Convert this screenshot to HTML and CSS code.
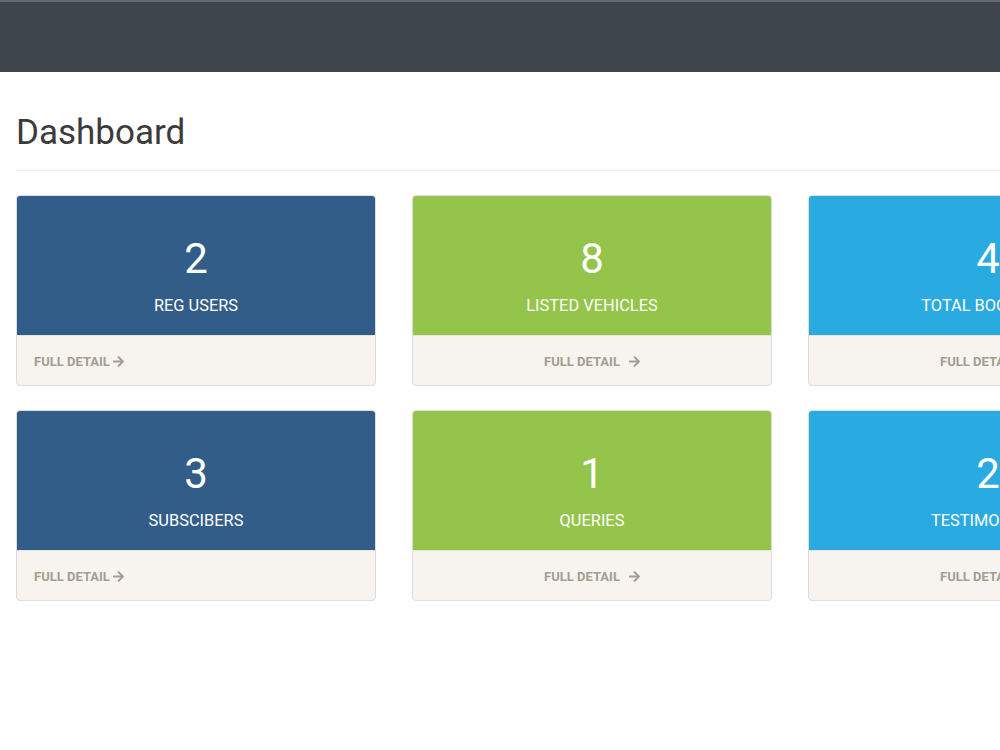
FILE: index.html
```html
<!DOCTYPE html>
<html lang="en">
<head>
    <meta charset="UTF-8">
    <meta name="viewport" content="width=device-width, initial-scale=1.0">
    <title>Dashboard</title>
    <link rel="stylesheet" href="styles.css">
</head>
<body>
    <div class="topbar"></div>

    <div class="content">
        <h2 class="page-title">Dashboard</h2>

        <div class="stats">
            <div class="panel">
                <div class="panel-body blue">
                    <div class="stat-num">2</div>
                    <div class="stat-label">Reg Users</div>
                </div>
                <div class="panel-footer left">
                    Full Detail<svg class="arrow" viewBox="0 0 448 512"><path d="M190.5 66.9l22.2-22.2c9.4-9.4 24.6-9.4 33.9 0L441 239c9.4 9.4 9.4 24.6 0 33.9L246.6 467.3c-9.4 9.4-24.6 9.4-33.9 0l-22.2-22.2c-9.5-9.5-9.3-25 .4-34.3L311.4 296H24c-13.3 0-24-10.7-24-24v-32c0-13.3 10.7-24 24-24h287.4L190.9 101.2c-9.8-9.3-10-24.8-.4-34.3z"/></svg>
                </div>
            </div>
            <div class="panel">
                <div class="panel-body green">
                    <div class="stat-num">8</div>
                    <div class="stat-label">Listed Vehicles</div>
                </div>
                <div class="panel-footer">
                    Full Detail <svg class="arrow spaced" viewBox="0 0 448 512"><path d="M190.5 66.9l22.2-22.2c9.4-9.4 24.6-9.4 33.9 0L441 239c9.4 9.4 9.4 24.6 0 33.9L246.6 467.3c-9.4 9.4-24.6 9.4-33.9 0l-22.2-22.2c-9.5-9.5-9.3-25 .4-34.3L311.4 296H24c-13.3 0-24-10.7-24-24v-32c0-13.3 10.7-24 24-24h287.4L190.9 101.2c-9.8-9.3-10-24.8-.4-34.3z"/></svg>
                </div>
            </div>
            <div class="panel">
                <div class="panel-body sky">
                    <div class="stat-num">4</div>
                    <div class="stat-label">Total Bookings</div>
                </div>
                <div class="panel-footer">
                    Full Detail <svg class="arrow spaced" viewBox="0 0 448 512"><path d="M190.5 66.9l22.2-22.2c9.4-9.4 24.6-9.4 33.9 0L441 239c9.4 9.4 9.4 24.6 0 33.9L246.6 467.3c-9.4 9.4-24.6 9.4-33.9 0l-22.2-22.2c-9.5-9.5-9.3-25 .4-34.3L311.4 296H24c-13.3 0-24-10.7-24-24v-32c0-13.3 10.7-24 24-24h287.4L190.9 101.2c-9.8-9.3-10-24.8-.4-34.3z"/></svg>
                </div>
            </div>

            <div class="panel">
                <div class="panel-body blue">
                    <div class="stat-num">3</div>
                    <div class="stat-label">Subscibers</div>
                </div>
                <div class="panel-footer left">
                    Full Detail<svg class="arrow" viewBox="0 0 448 512"><path d="M190.5 66.9l22.2-22.2c9.4-9.4 24.6-9.4 33.9 0L441 239c9.4 9.4 9.4 24.6 0 33.9L246.6 467.3c-9.4 9.4-24.6 9.4-33.9 0l-22.2-22.2c-9.5-9.5-9.3-25 .4-34.3L311.4 296H24c-13.3 0-24-10.7-24-24v-32c0-13.3 10.7-24 24-24h287.4L190.9 101.2c-9.8-9.3-10-24.8-.4-34.3z"/></svg>
                </div>
            </div>
            <div class="panel">
                <div class="panel-body green">
                    <div class="stat-num">1</div>
                    <div class="stat-label">Queries</div>
                </div>
                <div class="panel-footer">
                    Full Detail <svg class="arrow spaced" viewBox="0 0 448 512"><path d="M190.5 66.9l22.2-22.2c9.4-9.4 24.6-9.4 33.9 0L441 239c9.4 9.4 9.4 24.6 0 33.9L246.6 467.3c-9.4 9.4-24.6 9.4-33.9 0l-22.2-22.2c-9.5-9.5-9.3-25 .4-34.3L311.4 296H24c-13.3 0-24-10.7-24-24v-32c0-13.3 10.7-24 24-24h287.4L190.9 101.2c-9.8-9.3-10-24.8-.4-34.3z"/></svg>
                </div>
            </div>
            <div class="panel">
                <div class="panel-body sky">
                    <div class="stat-num">2</div>
                    <div class="stat-label">Testimonials</div>
                </div>
                <div class="panel-footer">
                    Full Detail <svg class="arrow spaced" viewBox="0 0 448 512"><path d="M190.5 66.9l22.2-22.2c9.4-9.4 24.6-9.4 33.9 0L441 239c9.4 9.4 9.4 24.6 0 33.9L246.6 467.3c-9.4 9.4-24.6 9.4-33.9 0l-22.2-22.2c-9.5-9.5-9.3-25 .4-34.3L311.4 296H24c-13.3 0-24-10.7-24-24v-32c0-13.3 10.7-24 24-24h287.4L190.9 101.2c-9.8-9.3-10-24.8-.4-34.3z"/></svg>
                </div>
            </div>
        </div>
    </div>
</body>
</html>
```

FILE: styles.css
```css
html, body {
    overflow: hidden;
}
body {
    margin: 0;
    font-family: Roboto, "Liberation Sans", sans-serif;
    background-color: #fff;
    color: #333;
}
.topbar {
    height: 70px;
    background-color: #3e454c;
    border-top: 2px solid #66686b;
}
.content {
    padding: 0 0 0 16px;
    width: 1200px;
}
.page-title {
    margin: 40px 0 0;
    padding-bottom: 16px;
    font-size: 35px;
    font-weight: 400;
    line-height: 42px;
    color: #3b3b3b;
    border-bottom: 1px solid #eee;
}
.stats {
    display: grid;
    grid-template-columns: repeat(3, 360px);
    column-gap: 36px;
    row-gap: 24px;
    margin-top: 24px;
}
.panel {
    border: 1px solid #ddd;
    border-radius: 4px;
    overflow: hidden;
    background-color: #f7f4ef;
}
.panel-body {
    height: 139px;
    box-sizing: border-box;
    padding-top: 36px;
    text-align: center;
    color: #fff;
}
.blue { background-color: #315d88; }
.green { background-color: #94c54a; }
.sky { background-color: #29aae0; }
.stat-num {
    font-size: 42px;
    line-height: 54px;
}
.stat-label {
    margin-top: 10px;
    font-size: 16.4px;
    font-weight: 400;
    text-transform: uppercase;
}
.panel-footer {
    height: 50px;
    border-top: 1px solid #e8e4dc;
    display: flex;
    align-items: center;
    justify-content: center;
    padding-top: 2px;
    box-sizing: border-box;
    font-size: 13px;
    font-weight: 700;
    color: #a29e92;
    text-transform: uppercase;
}
.panel-footer.left {
    justify-content: flex-start;
    padding-left: 17px;
}
.arrow {
    width: 11px;
    height: 13px;
    fill: #a29e92;
    margin-left: 3px;
}
.arrow.spaced {
    margin-left: 9px;
}
```
